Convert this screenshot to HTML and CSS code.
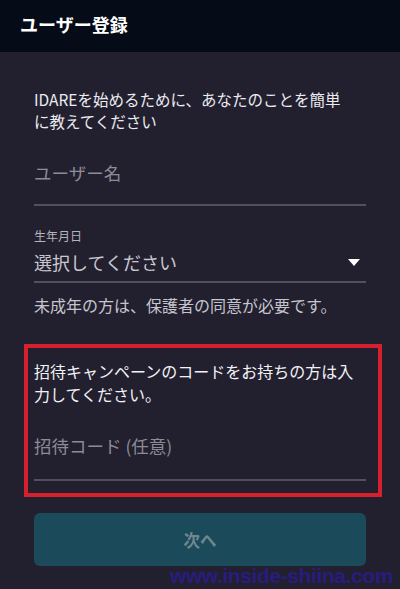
FILE: index.html
```html
<!DOCTYPE html>
<html lang="ja">
<head>
    <meta charset="UTF-8">
    <meta name="viewport" content="width=device-width, initial-scale=1.0">
    <title>ユーザー登録</title>
    <link rel="stylesheet" href="styles.css">
</head>
<body>

    <div class="screen">
        <header class="app-bar">
            <h1>ユーザー登録</h1>
        </header>

        <main class="form">
            <p class="intro">IDAREを始めるために、あなたのことを簡単に教えてください</p>

            <div class="field">
                <span class="placeholder">ユーザー名</span>
            </div>

            <div class="field select-field">
                <label class="small-label">生年月日</label>
                <div class="select-row">
                    <span class="select-value">選択してください</span>
                    <svg class="caret" width="12" height="7" viewBox="0 0 12 7">
                        <path d="M0 0 L12 0 L6 7 Z" fill="#ffffff"/>
                    </svg>
                </div>
            </div>

            <p class="note">未成年の方は、保護者の同意が必要です。</p>

            <section class="invite">
                <p class="invite-text">招待キャンペーンのコードをお持ちの方は入力してください。</p>
                <div class="field">
                    <span class="placeholder">招待コード (任意)</span>
                </div>
            </section>

            <button class="next-btn" type="button">次へ</button>
        </main>

        <div class="watermark">www.inside-shiina.com</div>
    </div>

</body>
</html>
```

FILE: styles.css
```css
* {
    box-sizing: border-box;
}

html, body {
    margin: 0;
    padding: 0;
}

body {
    width: 400px;
    height: 589px;
    overflow: hidden;
    background-color: #22202f;
    font-family: "Noto Sans CJK JP", "Noto Sans", sans-serif;
}

.screen {
    position: relative;
    width: 400px;
    height: 589px;
    background-color: #22202f;
}

.app-bar {
    height: 52px;
    padding-left: 20px;
    background-color: #060b18;
}

.app-bar h1 {
    margin: 0;
    font-size: 18px;
    line-height: 48px;
    font-weight: bold;
    color: #ffffff;
}

.form {
    display: flex;
    flex-direction: column;
    padding: 36px 34px 0;
}

.intro {
    margin: 0;
    padding-right: 24px;
    font-size: 15.5px;
    line-height: 22px;
    color: #ebebf0;
}

.field {
    margin-top: 29px;
    padding-bottom: 19px;
    border-bottom: 2px solid #52505d;
    line-height: 24px;
}

.placeholder {
    font-size: 17.5px;
    color: #8c8b96;
}

.select-field {
    margin-top: 22px;
    padding-bottom: 7px;
}

.small-label {
    display: block;
    font-size: 12px;
    line-height: 16px;
    color: #b4b3bc;
}

.select-row {
    display: flex;
    justify-content: space-between;
    align-items: center;
    margin-top: 6px;
    padding-right: 6px;
}

.select-value {
    font-size: 18px;
    color: #c9c8d0;
}

.note {
    margin: 11px 0 0;
    font-size: 16px;
    line-height: 22px;
    color: #c6c5cd;
}

.invite {
    margin: 28px -16px 0 -10px;
    padding: 12px 12px 12px 6px;
    border: 4px solid #d6202e;
}

.invite-text {
    margin: 0;
    font-size: 16px;
    line-height: 23px;
    color: #f2f2f5;
}

.invite .field {
    margin-top: 28px;
    padding-bottom: 21px;
}

.next-btn {
    margin-top: 16px;
    height: 53px;
    width: 100%;
    border: none;
    border-radius: 6px;
    background-color: #1b4a5a;
    color: #6f8890;
    font-family: "Noto Sans CJK JP", "Noto Sans", sans-serif;
    font-size: 16.5px;
    font-weight: bold;
}

/* blog watermark over the bottom edge */
.watermark {
    position: absolute;
    right: 7px;
    bottom: 1px;
    font-family: "Liberation Sans", Arial, sans-serif;
    font-size: 21px;
    font-weight: bold;
    letter-spacing: -0.4px;
    color: #281d7e;
}
```
